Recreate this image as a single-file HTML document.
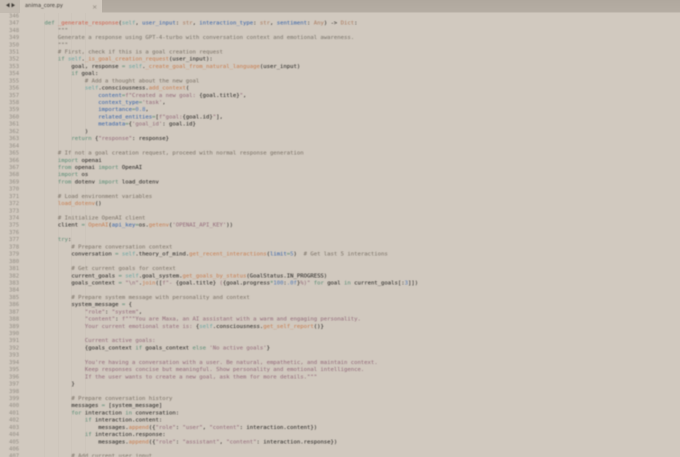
<!DOCTYPE html>
<html><head><meta charset="utf-8">
<style>
html,body{margin:0;padding:0;width:680px;height:457px;overflow:hidden;background:#d1c9bf}
#bar{position:absolute;left:0;top:0;width:680px;height:12px;background:linear-gradient(#b0a89e,#b5ada3)}
#left{position:absolute;left:0;top:0;width:20px;height:13px;background:#c3bbb1}
#tab{position:absolute;left:20px;top:0;width:82px;height:13px;background:#d1c9bf}
#edge{position:absolute;left:102px;top:12px;width:578px;height:1px;background:#c4bcb2}
#wrap{position:absolute;left:0;top:0;width:680px;height:457px;overflow:hidden;filter:blur(.4px)}
.ui{position:absolute;font-family:"DejaVu Sans",sans-serif;color:#4a4640;white-space:pre}
pre{position:absolute;margin:0;font-family:"DejaVu Sans Mono",monospace;font-size:22.36px;line-height:28.88px;transform:scale(.25);transform-origin:0 0;color:#2b2a28;-webkit-text-stroke:.2px currentColor}
#nums{left:8.6px;top:12.1px;color:#948e85;-webkit-text-stroke:0}
#code{left:30.75px;top:12.1px}
.g{position:absolute;top:13px;width:1px;height:444px;background:#cdc5bb}
.k{color:#5f9079}.f{color:#c98257}.s{color:#6fa8a4}.p{color:#3f69ab}.t{color:#ad7f64}
.c{color:#7f766b}.q{color:#97707f}.d{color:#7d786f}.n{color:#5f82b8}.r{color:#cf6552}
</style></head><body>
<div id="bar"></div><div id="left"></div><div id="tab"></div><div id="edge"></div>
<div class="g" style="left:44px"></div><div class="g" style="left:58px"></div><div class="g" style="left:71px"></div><div class="g" style="left:85px"></div>
<div id="wrap">
<svg style="position:absolute;left:0;top:0" width="20" height="12"><path d="M9.5 3 L6 5.2 L9.5 7.4 Z M11.5 3 L15 5.2 L11.5 7.4 Z" fill="#3f3b36"/></svg>
<div class="ui" style="left:25px;top:3.2px;font-size:5.2px;color:#3f3b36">anima_core.py</div>
<div class="ui" style="left:92px;top:2.5px;font-size:6.5px;color:#8d867c">×</div>
<pre id="nums">346
347
348
349
350
351
352
353
354
355
356
357
358
359
360
361
362
363
364
365
366
367
368
369
370
371
372
373
374
375
376
377
378
379
380
381
382
383
384
385
386
387
388
389
390
391
392
393
394
395
396
397
398
399
400
401
402
403
404
405
406
407</pre>
<pre id="code">

    <span class="k">def</span> <span class="r">_generate_response</span>(<span class="s">self</span>, <span class="p">user_input</span>: <span class="t">str</span>, <span class="p">interaction_type</span>: <span class="t">str</span>, <span class="p">sentiment</span>: <span class="t">Any</span>) -&gt; <span class="t">Dict</span>:
        <span class="d">"""</span>
        <span class="d">Generate a response using GPT-4-turbo with conversation context and emotional awareness.</span>
        <span class="d">"""</span>
        <span class="c"># First, check if this is a goal creation request</span>
        <span class="k">if</span> <span class="s">self</span>.<span class="f">_is_goal_creation_request</span>(user_input):
            goal, response <span class="k">=</span> <span class="s">self</span>.<span class="f">_create_goal_from_natural_language</span>(user_input)
            <span class="k">if</span> goal:
                <span class="c"># Add a thought about the new goal</span>
                <span class="s">self</span>.consciousness.<span class="f">add_context</span>(
                    <span class="p">content</span><span class="k">=</span><span class="q">f"Created a new goal: </span>{goal.title}<span class="q">"</span>,
                    <span class="p">context_type</span><span class="k">=</span><span class="q">'task'</span>,
                    <span class="p">importance</span><span class="k">=</span><span class="n">0.8</span>,
                    <span class="p">related_entities</span><span class="k">=</span>[<span class="q">f"goal:</span>{goal.id}<span class="q">"</span>],
                    <span class="p">metadata</span><span class="k">=</span>{<span class="q">'goal_id'</span>: goal.id}
                )
            <span class="k">return</span> {<span class="q">"response"</span>: response}

        <span class="c"># If not a goal creation request, proceed with normal response generation</span>
        <span class="k">import</span> openai
        <span class="k">from</span> openai <span class="k">import</span> OpenAI
        <span class="k">import</span> os
        <span class="k">from</span> dotenv <span class="k">import</span> load_dotenv

        <span class="c"># Load environment variables</span>
        <span class="f">load_dotenv</span>()

        <span class="c"># Initialize OpenAI client</span>
        client <span class="k">=</span> <span class="f">OpenAI</span>(<span class="p">api_key</span><span class="k">=</span>os.<span class="f">getenv</span>(<span class="q">'OPENAI_API_KEY'</span>))

        <span class="k">try</span>:
            <span class="c"># Prepare conversation context</span>
            conversation <span class="k">=</span> <span class="s">self</span>.theory_of_mind.<span class="f">get_recent_interactions</span>(<span class="p">limit</span><span class="k">=</span><span class="n">5</span>)  <span class="c"># Get last 5 interactions</span>

            <span class="c"># Get current goals for context</span>
            current_goals <span class="k">=</span> <span class="s">self</span>.goal_system.<span class="f">get_goals_by_status</span>(GoalStatus.IN_PROGRESS)
            goals_context <span class="k">=</span> <span class="q">"\n"</span>.<span class="f">join</span>([<span class="q">f"- </span>{goal.title} <span class="q">(</span>{goal.progress<span class="k">*</span><span class="n">100</span>:<span class="n">.0f</span>}<span class="q">%)"</span> <span class="k">for</span> goal <span class="k">in</span> current_goals[:<span class="n">3</span>]])

            <span class="c"># Prepare system message with personality and context</span>
            system_message <span class="k">=</span> {
                <span class="q">"role"</span>: <span class="q">"system"</span>,
                <span class="q">"content"</span>: <span class="q">f"""You are Maxa, an AI assistant with a warm and engaging personality.</span>
                <span class="q">Your current emotional state is: </span>{<span class="s">self</span>.consciousness.<span class="f">get_self_report</span>()}

                <span class="q">Current active goals:</span>
                {goals_context <span class="k">if</span> goals_context <span class="k">else</span> <span class="q">'No active goals'</span>}

                <span class="q">You're having a conversation with a user. Be natural, empathetic, and maintain context.</span>
                <span class="q">Keep responses concise but meaningful. Show personality and emotional intelligence.</span>
                <span class="q">If the user wants to create a new goal, ask them for more details."""</span>
            }

            <span class="c"># Prepare conversation history</span>
            messages <span class="k">=</span> [system_message]
            <span class="k">for</span> interaction <span class="k">in</span> conversation:
                <span class="k">if</span> interaction.content:
                    messages.<span class="f">append</span>({<span class="q">"role"</span>: <span class="q">"user"</span>, <span class="q">"content"</span>: interaction.content})
                <span class="k">if</span> interaction.response:
                    messages.<span class="f">append</span>({<span class="q">"role"</span>: <span class="q">"assistant"</span>, <span class="q">"content"</span>: interaction.response})

            <span class="c"># Add current user input</span></pre>
</div>
</body></html>
